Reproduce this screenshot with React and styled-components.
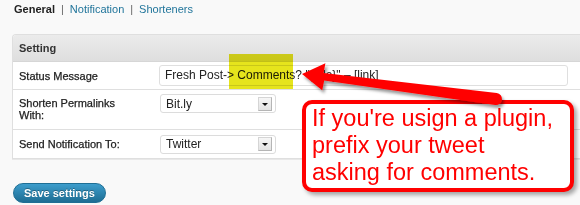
import React from 'react';
import styled, { createGlobalStyle } from 'styled-components';

const GlobalStyle = createGlobalStyle`
  html, body {
    margin: 0;
    padding: 0;
    background: #f9f9f9;
    overflow: hidden;
  }
  body {
    font-family: "Liberation Sans", Arial, sans-serif;
    font-size: 11px;
    color: #333;
  }
`;

const rows = [
  { label: 'Status Message', kind: 'text', value: 'Fresh Post-> Comments? "{title}" \u2013 [link]', height: 27 },
  { label: 'Shorten Permalinks With:', kind: 'select', value: 'Bit.ly', height: 39, top: true },
  { label: 'Send Notification To:', kind: 'select', value: 'Twitter', height: 28, last: true },
];

function App() {
  return (
    <Page>
      <GlobalStyle />
      <Tabs>
        <Current>General</Current>
        <Sep>|</Sep>
        <TabLink>Notification</TabLink>
        <Sep>|</Sep>
        <TabLink>Shorteners</TabLink>
      </Tabs>

      <Panel>
        <Header>Setting</Header>
        {rows.map((r) => (
          <Row key={r.label} $h={r.height} $top={r.top} $last={r.last}>
            <Label $top={r.top}>{r.label}</Label>
            <Field $top={r.top}>
              {r.kind === 'text' ? (
                <TextBox>{r.value}</TextBox>
              ) : (
                <Select>
                  <span>{r.value}</span>
                  <DropButton />
                </Select>
              )}
            </Field>
          </Row>
        ))}
      </Panel>

      <SaveButton>Save settings</SaveButton>

      <Highlight />
      <Callout>
        If you're usign a plugin,
        <br />
        prefix your tweet
        <br />
        asking for comments.
      </Callout>
      <ArrowLayer width="580" height="205" viewBox="0 0 580 205">
        <defs>
          <filter id="arrowShadow" x="-10%" y="-50%" width="120%" height="200%">
            <feDropShadow dx="2" dy="3" stdDeviation="1.6" floodColor="#000" floodOpacity="0.4" />
          </filter>
        </defs>
        <g fill="#f00" filter="url(#arrowShadow)">
          <path d="M302 74 L325.4 63.2 L323.6 73 L496.7 93 A6 6 0 0 1 495.3 105 L324.2 80.6 L322.2 90.2 Z" />
        </g>
      </ArrowLayer>
    </Page>
  );
}

const Page = styled.div`
  position: relative;
  width: 580px;
  height: 205px;
  padding: 2px 0 0 12px;
  box-sizing: border-box;
  overflow: hidden;
`;

const Tabs = styled.div`
  height: 14px;
  line-height: 14px;
  margin-left: 2px;
  font-size: 11px;
`;

const Current = styled.span`
  font-weight: bold;
  color: #222;
`;

const Sep = styled.span`
  color: #666;
  margin: 0 6px;
`;

const TabLink = styled.span`
  color: #21759b;
`;

const Panel = styled.div`
  margin-top: 18px;
  width: 567px;
  border: 1px solid #dfdfdf;
  border-right: none;
  border-radius: 4px 0 0 0;
  background: #fff;
  box-shadow: 0 1px 0 #e8e8e8;
`;

const Header = styled.div`
  height: 26px;
  line-height: 26px;
  padding-left: 6px;
  font-weight: bold;
  color: #333;
  background: linear-gradient(to bottom, #ebebeb, #dedede);
  border-bottom: 1px solid #d6d6d6;
  border-radius: 3px 0 0 0;
`;

const Row = styled.div`
  display: grid;
  grid-template-columns: 140px 1fr;
  align-items: ${(p) => (p.$top ? 'start' : 'center')};
  height: ${(p) => p.$h}px;
  border-bottom: ${(p) => (p.$last ? 'none' : '1px solid #dfdfdf')};
`;

const Label = styled.div`
  padding: ${(p) => (p.$top ? '7px' : '0')} 16px 0 6px;
  line-height: 12px;
  color: #222;
  -webkit-text-stroke: 0.25px #222;
`;

const Field = styled.div`
  padding-top: ${(p) => (p.$top ? '4px' : '0')};
`;

const TextBox = styled.div`
  width: 402px;
  height: 19px;
  line-height: 19px;
  margin-left: 6px;
  padding-left: 5px;
  border: 1px solid #dfdfdf;
  border-radius: 3px;
  font-size: 12px;
  color: #222;
  white-space: nowrap;
  overflow: hidden;
`;

const Select = styled.div`
  display: flex;
  align-items: center;
  justify-content: space-between;
  width: 106px;
  height: 17px;
  margin-left: 7px;
  padding: 0 3px 0 5px;
  border: 1px solid #dcdcdc;
  border-radius: 3px;
  font-size: 12px;
  color: #222;
  background: #fff;
`;

const DropButton = styled.span`
  position: relative;
  width: 12px;
  height: 12px;
  border: 1px solid #b5b5b5;
  border-top-color: #d5d5d5;
  border-left-color: #d5d5d5;
  background: linear-gradient(to bottom, #f6f6f6, #e3e3e3);
  &::after {
    content: '';
    position: absolute;
    left: 3px;
    top: 5px;
    border-left: 3px solid transparent;
    border-right: 3px solid transparent;
    border-top: 3px solid #111;
  }
`;

const SaveButton = styled.div`
  display: inline-block;
  margin-top: 24px;
  margin-left: 1px;
  height: 18px;
  line-height: 18px;
  padding: 0 10px;
  border: 1px solid #1f6f95;
  border-radius: 11px;
  background: linear-gradient(to bottom, #3d9dcc, #1e6d93);
  color: #fff;
  font-weight: bold;
  font-size: 11px;
  text-shadow: 0 -1px 0 rgba(0, 0, 0, 0.3);
`;

const Highlight = styled.div`
  position: absolute;
  left: 229px;
  top: 54px;
  width: 64px;
  height: 35px;
  background: #e6e41c;
  mix-blend-mode: multiply;
`;

const Callout = styled.div`
  position: absolute;
  left: 302px;
  top: 100px;
  width: 256px;
  padding: 1px 2px 2px 6px;
  border: 4px solid #f00;
  border-radius: 10px;
  background: #fff;
  box-shadow: 3px 3px 4px rgba(0, 0, 0, 0.35);
  color: #f00;
  font-family: "Liberation Sans", Arial, sans-serif;
  font-size: 23.5px;
  line-height: 27px;
  white-space: nowrap;
`;

const ArrowLayer = styled.svg`
  position: absolute;
  left: 0;
  top: 0;
  pointer-events: none;
`;

export default App;
